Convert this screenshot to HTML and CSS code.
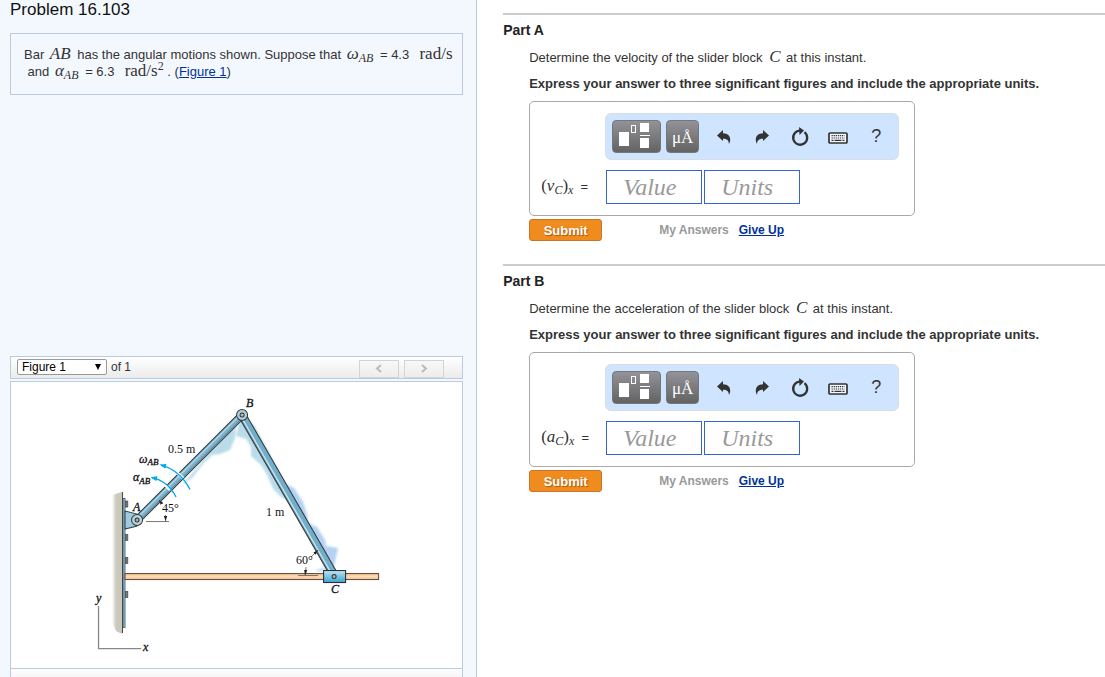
FILE: index.html
```html
<!DOCTYPE html>
<html lang="en">
<head>
	<meta charset="utf-8">
	<meta name="viewport" content="width=device-width, initial-scale=1">
	<title>Problem 16.103</title>
	<link rel="stylesheet" href="styles.css">
</head>
<body>
	<svg class="sprites" aria-hidden="true">
		<symbol id="icon-template" viewBox="0 0 35 27">
			<rect x="0" y="9" width="10" height="14" fill="#fff"/>
			<rect x="12.500" y="2.500" width="4" height="7" fill="none" stroke="#fff"/>
			<path d="M21 0h9v9h-9zM21 12h10v1H21zM21 15h9v10h-9z" fill="#fff"/>
		</symbol>
		<symbol id="icon-undo" viewBox="0 0 16 16">
			<path d="M1 6.500L7 1v3.200c4.500.2 7.200 2.600 7.200 6.200 0 1.700-.5 3.200-1.300 4.600.1-3.600-1.900-5.200-5.900-5.300V12z"/>
		</symbol>
		<symbol id="icon-redo" viewBox="0 0 16 16">
			<path d="M15 6.500L9 1v3.200C4.500 4.400 1.800 6.800 1.800 10.400c0 1.700.5 3.200 1.300 4.600C3 11.400 5 9.800 9 9.700V12z"/>
		</symbol>
		<symbol id="icon-reset" viewBox="0 0 18 20">
			<path d="M9.500 3.700A7 7 0 1 0 13.500 5.200" fill="none" stroke="#333" stroke-width="2.300"/>
			<path d="M8 0l5 3.500L8.500 8z"/>
		</symbol>
		<symbol id="icon-keyboard" viewBox="0 0 20 14">
			<rect x="1" y="2" width="18" height="10" rx="1" fill="#f4f9ff" stroke="#333" stroke-width="1.700"/>
			<path d="M3.500 4.700h13M3.500 7h13" stroke="#333" stroke-width="1.200" stroke-dasharray="1.300 .8"/>
			<path d="M3.500 9.300h2M6.500 9.300h7M14.500 9.300h2" stroke="#333" stroke-width="1.200"/>
		</symbol>
	</svg>

	<div class="page">
		<aside class="sidebar">
			<h1 class="title">Problem 16.103</h1>
			<div class="statement">
				Bar <i class="math">AB</i> has the angular motions shown. Suppose that <i class="math">ω<sub>AB</sub></i> = 4.3 &nbsp;<span class="math unit">rad/s</span><br>
				&nbsp;and <i class="math">α<sub>AB</sub></i> = 6.3 &nbsp;<span class="math unit">rad/s<sup>2</sup></span> . (<a href="#figure">Figure 1</a>)
			</div>

			<div class="figure-bar">
				<span class="pick">
					<select id="figure-pick">
						<option>Figure 1</option>
					</select>
				</span>
				<label for="figure-pick">of 1</label>
				<div class="pager">
					<button type="button" aria-label="Previous figure" disabled><svg width="8" height="9" viewBox="0 0 8 9"><path d="M6 1L2 4.500L6 8"/></svg></button>
					<button type="button" aria-label="Next figure" disabled><svg width="8" height="9" viewBox="0 0 8 9"><path d="M2 1l4 3.500L2 8"/></svg></button>
				</div>
			</div>
			<div class="figure" id="figure">
				<svg class="diagram" viewBox="11 382 451 286" preserveAspectRatio="xMinYMin meet" role="img" aria-label="Bar AB and slider C">
					<defs>
						<linearGradient id="wall">
							<stop offset="0" stop-color="#cdcbbd" stop-opacity="0"/>
							<stop offset=".4" stop-color="#cdcbbd"/>
							<stop offset="1" stop-color="#c9c7b8"/>
						</linearGradient>
						<linearGradient id="rod" x2="0" y2="1">
							<stop offset="0" stop-color="#f3b98a"/>
							<stop offset=".5" stop-color="#ffdcb9"/>
							<stop offset="1" stop-color="#f3b98a"/>
						</linearGradient>
						<linearGradient id="slider" x2="0" y2="1">
							<stop offset="0" stop-color="#bfe6f5"/>
							<stop offset="1" stop-color="#3ba3c9"/>
						</linearGradient>
						<filter id="soft" x="-20%" y="-20%" width="140%" height="140%"><feGaussianBlur stdDeviation="1.300"/></filter>
						<marker id="blue-head" viewBox="0 0 8 6" markerWidth="7" markerHeight="5" refX="6" refY="3" orient="auto" markerUnits="userSpaceOnUse">
							<path d="M0 0l8 3-8 3z" fill="#00a9ec"/>
						</marker>
						<marker id="head" viewBox="0 0 6 4" markerWidth="5" markerHeight="4" refX="6" refY="2" orient="auto" markerUnits="userSpaceOnUse">
							<path d="M0 0l6 2-6 2z" fill="#222"/>
						</marker>
					</defs>

					<!-- cast shadows -->
					<g filter="url(#soft)">
						<path d="M176 492L236 422l-1 16-5 12-10 4-8 1-10 10-9 12-13 10z" fill="#b9dcea"/>
						<path d="M240 418l-4 18 10 3 5 8 0 9 10 9 6 10 6 14 8 8 9 4 4 -2-40-74z" fill="#b9dcea"/>
						<path d="M286 484l8 4 9 14 4 12 1 9 9 4 8 13 1 6 12 2-5 22-8-2z" fill="#b5d2f3"/>
						<path d="M314 571l8-3 8 3z" fill="#b9dcea"/>
					</g>

					<!-- wall, mounting plate and bolts -->
					<path d="M112 495l10-3v142l-6-3-4-8z" fill="url(#wall)"/>
					<path d="M122.500 492v141" stroke="#444"/>
					<rect x="123" y="498.500" width="2" height="129" fill="#8fc7df" stroke="#345" stroke-width=".7"/>
					<g fill="#777" stroke="#444" stroke-width=".7">
						<rect x="125.300" y="501" width="2.500" height="6"/>
						<rect x="125.300" y="534.500" width="2.500" height="6"/>
						<rect x="125.300" y="557.500" width="2.500" height="6"/>
						<rect x="125.300" y="591.500" width="2.500" height="6"/>
					</g>

					<rect x="125" y="573.500" width="253.500" height="6" fill="url(#rod)" stroke="#5b4a3c"/>

					<!-- bars -->
					<path d="M125 511l12 3v12l-12 3z" fill="#9fcbe0" stroke="#344"/>
					<path d="M137 520L242 415" stroke="#333" stroke-width="8"/>
					<path d="M137 520L242 415" stroke="#79b2cd" stroke-width="6"/>
					<path d="M136 519L241 414" stroke="#b5d8e8" stroke-width="1.300"/>
					<path d="M138.500 521.500L243.500 416.500" stroke="#555" stroke-width=".5"/>
					<path d="M242 415l91 158" stroke="#333" stroke-width="8.500"/>
					<path d="M242 415l91 158" stroke="#70aeca" stroke-width="6.500"/>
					<path d="M240.500 416l90.500 157" stroke="#c3e3f0" stroke-width="1.600"/>
					<path d="M239.500 416.500l90.500 157" stroke="#555" stroke-width=".5"/>
					<rect x="323.500" y="570.500" width="22" height="12" fill="url(#slider)" stroke="#223"/>
					<g stroke="#333">
						<circle cx="137" cy="520" r="5.500" fill="#b6d6e4"/>
						<circle cx="137" cy="520" r="2" fill="#aaa"/>
						<circle cx="242" cy="415" r="5.500" fill="#a9cfe0"/>
						<circle cx="242" cy="415" r="2" fill="#bbb"/>
						<circle cx="334" cy="576.500" r="2" fill="#9bb"/>
					</g>

					<!-- rotation arrows -->
					<g fill="none" stroke="#fff" stroke-width="3">
						<path d="M183 478q-6-6-12-9"/>
						<path d="M170 490q-4-5-7-6"/>
					</g>
					<g fill="none" stroke="#00a9ec" stroke-width="1.300" marker-end="url(#blue-head)">
						<path d="M190 489.500Q180 470 161 465"/>
						<path d="M176 497Q168 481 152 477.500"/>
					</g>

					<!-- angles -->
					<g fill="none" stroke="#555" stroke-width=".8">
						<path d="M146 521.500h23M298 575.500h20"/>
						<path d="M165.500 515v6" marker-end="url(#head)"/>
						<path d="M162 504l-3-4" marker-end="url(#head)"/>
						<path d="M306 567l-1 8" marker-end="url(#head)"/>
						<path d="M311 557l7-7" marker-end="url(#head)"/>
					</g>

					<path d="M98.500 606v42.500H141" fill="none" stroke="#888" stroke-width="1.300"/>

					<g class="labels">
						<text x="168" y="453">0.5 m</text>
						<text x="266" y="516">1 m</text>
						<text x="162" y="512">45°</text>
						<text x="296" y="564">60°</text>
						<g class="var">
							<text x="139" y="463">ω<tspan class="small" dy="2">AB</tspan></text>
							<text x="133" y="481">α<tspan class="small" dy="3">AB</tspan></text>
							<text x="133" y="511">A</text>
							<text x="246" y="407">B</text>
							<text x="331" y="593">C</text>
							<text x="96" y="602">y</text>
							<text x="143" y="651">x</text>
						</g>
					</g>
				</svg>
			</div>
			<div class="sidebar-foot"></div>
		</aside>

		<main class="parts">
			<section class="part">
				<h2>Part A</h2>
				<form class="part-body">
					<p>Determine the velocity of the slider block <i class="math">C</i> at this instant.</p>
					<p><strong>Express your answer to three significant figures and include the appropriate units.</strong></p>
					<div class="answer">
						<div class="toolbar">
							<button class="dark wide" type="button" aria-label="Templates"><svg width="35" height="27"><use href="#icon-template"/></svg></button>
							<button class="dark" type="button">μÅ</button>
							<div class="tools">
								<button type="button" aria-label="Undo"><svg width="16" height="16"><use href="#icon-undo"/></svg></button>
								<button type="button" aria-label="Redo"><svg width="16" height="16"><use href="#icon-redo"/></svg></button>
								<button type="button" aria-label="Reset"><svg width="18" height="20"><use href="#icon-reset"/></svg></button>
								<button type="button" aria-label="Keyboard"><svg class="keys" width="20" height="14"><use href="#icon-keyboard"/></svg></button>
								<button type="button">?</button>
							</div>
						</div>
						<label class="quantity" for="value-a"><span class="math">(<i>v<sub>C</sub></i>)<sub><i>x</i></sub></span>&nbsp; =</label>
						<div class="fields">
							<input type="text" id="value-a" placeholder="Value">
							<input type="text" aria-label="Units" placeholder="Units">
						</div>
					</div>
					<div class="actions">
						<button class="submit" type="button">Submit</button>
						<span class="mine">My Answers</span>
						<a href="#">Give Up</a>
					</div>
				</form>
			</section>

			<section class="part">
				<h2>Part B</h2>
				<form class="part-body">
					<p>Determine the acceleration of the slider block <i class="math">C</i> at this instant.</p>
					<p><strong>Express your answer to three significant figures and include the appropriate units.</strong></p>
					<div class="answer">
						<div class="toolbar">
							<button class="dark wide" type="button" aria-label="Templates"><svg width="35" height="27"><use href="#icon-template"/></svg></button>
							<button class="dark" type="button">μÅ</button>
							<div class="tools">
								<button type="button" aria-label="Undo"><svg width="16" height="16"><use href="#icon-undo"/></svg></button>
								<button type="button" aria-label="Redo"><svg width="16" height="16"><use href="#icon-redo"/></svg></button>
								<button type="button" aria-label="Reset"><svg width="18" height="20"><use href="#icon-reset"/></svg></button>
								<button type="button" aria-label="Keyboard"><svg class="keys" width="20" height="14"><use href="#icon-keyboard"/></svg></button>
								<button type="button">?</button>
							</div>
						</div>
						<label class="quantity" for="value-b"><span class="math">(<i>a<sub>C</sub></i>)<sub><i>x</i></sub></span>&nbsp; =</label>
						<div class="fields">
							<input type="text" id="value-b" placeholder="Value">
							<input type="text" aria-label="Units" placeholder="Units">
						</div>
					</div>
					<div class="actions">
						<button class="submit" type="button">Submit</button>
						<span class="mine">My Answers</span>
						<a href="#">Give Up</a>
					</div>
				</form>
			</section>
		</main>
	</div>
</body>
</html>
```
FILE: styles.css
```css
* {
	box-sizing: border-box;
}
body {
	margin: 0;
	background: #fff;
	color: #333;
	font: 13px/18px "Liberation Sans", Arial, sans-serif;
}
button, select, input {
	font-family: inherit;
	margin: 0;
	padding: 0;
}
a {
	color: #039;
}
.sprites {
	display: none;
}
.page {
	display: grid;
	grid-template-columns: minmax(0, 19fr) minmax(0, 25fr);
	min-height: 100vh;
}

/* math */
.math {
	font-family: "Liberation Serif", "Times New Roman", serif;
	font-size: 17px;
	line-height: 0;
}
i.math {
	margin: 0 2px 0 3px;
}
.statement i.math {
	margin: 0 3px 0 2px;
}
.math.unit {
	margin-left: 3px;
}
.math sub, .math sup {
	font-size: 12px;
	line-height: 0;
}
.math sub {
	vertical-align: -3px;
}
.math sup {
	vertical-align: 6px;
}

/* left column */
.sidebar {
	display: flex;
	flex-direction: column;
	padding: 0 13px 0 10px;
	background: #f3f8ff;
	border-right: 1px solid #b9cbdd;
}
.title {
	margin: 0 0 14px;
	color: #111;
	font-size: 17px;
	font-weight: normal;
	line-height: 19px;
}
.statement {
	padding: 12px 0 14px 13px;
	border: 1px solid #b9cbdd;
	line-height: 17px;
	white-space: nowrap;
}
.figure-bar {
	display: flex;
	align-items: center;
	gap: 4px;
	height: 23px;
	margin-top: auto;
	padding: 0 18px 0 6px;
	border: 1px solid #b9cbdd;
	background: linear-gradient(#fff, #ebebeb);
	font-size: 12px;
}
.pick {
	position: relative;
	display: flex;
}
.pick::after {
	content: "";
	position: absolute;
	top: 5px;
	right: 6px;
	border: 3px solid transparent;
	border-top: 6px solid #000;
	border-bottom: 0;
	pointer-events: none;
}
.pick select {
	appearance: none;
	width: 90px;
	height: 16px;
	padding-left: 4px;
	border: 1px solid #999;
	border-radius: 2px;
	background: #fff;
	color: #000;
	font-size: 12px;
	line-height: 14px;
}
.pager {
	display: flex;
	gap: 5px;
	align-self: flex-end;
	margin-left: auto;
}
.pager button {
	display: flex;
	align-items: center;
	justify-content: center;
	width: 40px;
	height: 18px;
	border: 1px solid #d4d4d4;
	background: linear-gradient(#f8f8f8, #ededed);
}
.pager path {
	fill: none;
	stroke: #bbb;
	stroke-width: 2;
}
.figure {
	margin-top: 2px;
	border: 1px solid #b9cbdd;
	background: #fff;
}
.diagram {
	display: block;
	width: 100%;
}
.sidebar-foot {
	height: 8px;
	border: 1px solid #b9cbdd;
	border-width: 0 1px;
	background: linear-gradient(#fdfdfd, #f6f6f6);
}
.labels {
	fill: #111;
	font: 12px "Liberation Serif", "Times New Roman", serif;
}
.labels .var {
	font-style: italic;
	stroke: #111;
	stroke-width: .3px;
}
.labels .small {
	font-size: 9px;
}

/* right column */
.parts {
	padding: 13px 0 0 26px;
}
.part {
	margin-bottom: 23px;
	padding-top: 7px;
	border-top: 2px solid #ccc;
}
.part h2 {
	margin: 0 0 11px;
	color: #222;
	font-size: 14px;
	line-height: 16px;
}
.part-body {
	padding-left: 26px;
}
.part-body p {
	margin: 0 0 8px;
}
.answer {
	display: grid;
	grid-template-columns: 64px auto;
	align-items: center;
	row-gap: 10px;
	width: fit-content;
	padding: 11px 15px 11px 11px;
	border: 1px solid #aaa;
	border-radius: 5px;
}
.toolbar {
	grid-column: 2;
	display: flex;
	gap: 5px;
	padding: 6px 3px 6px 6px;
	border: 1px solid #d9dde3;
	border-radius: 6px;
	background: #cfe5ff;
}
.dark {
	display: flex;
	align-items: center;
	justify-content: center;
	width: 33px;
	height: 33px;
	border: 1px solid #777;
	border-radius: 4px;
	background: linear-gradient(#939299, #636363);
	color: #fff;
	font-size: 17px;
}
.toolbar .dark {
	padding-top: 3px;
	font-family: "Liberation Serif", "Times New Roman", serif;
}
.toolbar .dark.wide {
	width: 49px;
	padding-top: 0;
}
.tools {
	display: flex;
	padding-left: 1px;
}
.tools button {
	display: flex;
	align-items: center;
	justify-content: center;
	width: 38px;
	border: 0;
	background: none;
	color: #333;
	font-size: 18px;
}
.tools svg {
	fill: #333;
}
.tools .keys {
	margin-top: 3px;
}
.quantity {
	white-space: nowrap;
}
.fields {
	display: flex;
	gap: 2px;
	padding-left: 1px;
}
.fields input {
	width: 96px;
	height: 34px;
	padding-left: 16px;
	border: 1px solid #36c;
	background: #fff;
	font: italic 24px "Liberation Serif", "Times New Roman", serif;
}
.fields input::placeholder {
	color: #999;
	opacity: 1;
}
.actions {
	display: flex;
	align-items: center;
	margin-top: 3px;
	font-size: 12px;
	font-weight: bold;
}
.submit {
	width: 73px;
	height: 22px;
	border: 1px solid #c8752a;
	border-radius: 3px;
	background: #f08c1e;
	color: #fff;
	font-size: 13px;
	font-weight: bold;
	text-shadow: 1px 1px 1px #a55a10;
}
.mine {
	margin: 0 10px 0 57px;
	color: #999;
}
```
